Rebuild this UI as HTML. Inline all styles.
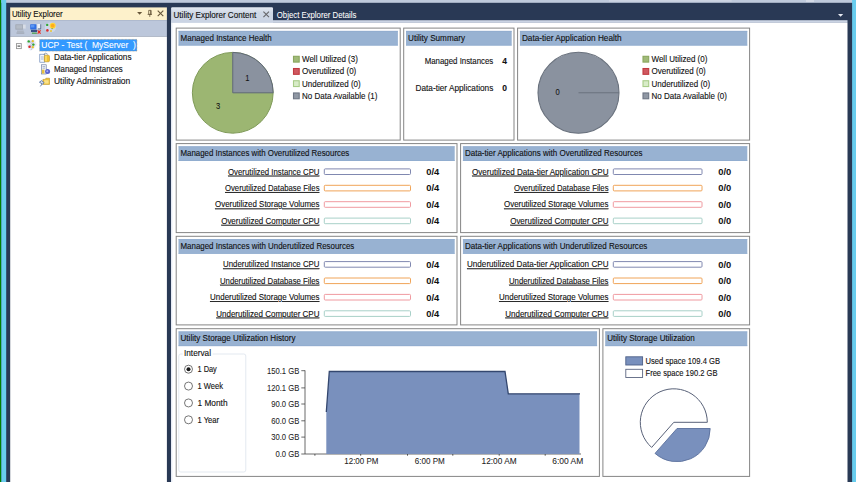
<!DOCTYPE html>
<html lang="en"><head><meta charset="utf-8"><title>Utility Explorer</title>
<style>
html,body{margin:0;padding:0;background:#293955;}
body{width:856px;height:482px;overflow:hidden;font-family:"Liberation Sans",Arial,sans-serif;}
svg{display:block;}
text{white-space:pre;}
</style></head><body>
<svg width="856" height="482" viewBox="0 0 856 482" font-family="'Liberation Sans', Arial, sans-serif" font-size="8">
<rect x="0" y="0" width="856" height="482" fill="#293955" />
<rect x="0" y="0" width="856" height="2.8" fill="#bfcadc" />
<rect x="609" y="0" width="122.6" height="1.6" fill="#ccd4e2" />
<rect x="806" y="0" width="8" height="2" fill="#d3dae6" />
<rect x="852.1" y="0" width="3.9" height="482" fill="#68cdee" />
<rect x="0" y="0" width="1.3" height="482" fill="#008000" />
<rect x="1.3" y="0" width="4.9" height="482" fill="#68cdee" />
<rect x="10.2" y="7.4" width="156.7" height="12.7" fill="#fdf1cb" />
<rect x="10.2" y="20.1" width="156.7" height="16.5" fill="#bcc7db" />
<rect x="10.2" y="36.6" width="156.7" height="445.4" fill="#ffffff" />
<text x="11.9" y="16.7" font-size="8.56" text-anchor="start" fill="#111"  textLength="50.8" lengthAdjust="spacingAndGlyphs" stroke="#111" stroke-width="0.12">Utility Explorer</text>
<path d="M137.1 12h5.1l-2.55 2.8z" fill="#66563a"/>
<path d="M148.7 10.4h2.4v4h-2.4zM150.6 10.4v4M147.6 14.4h4.4M149.8 14.6v2.3" fill="none" stroke="#66563a" stroke-width="0.8"/>
<path d="M157.7 10.7l5.6 5.4M163.3 10.7l-5.6 5.4" stroke="#66563a" stroke-width="1.1" fill="none"/>
<g><rect x="15.3" y="24.3" width="8" height="5.4" rx="0.6" fill="#a4abb6"/><rect x="16.3" y="25.2" width="6" height="3.4" fill="#b4bbc6"/><rect x="23" y="24.6" width="2.7" height="4" fill="#d8dde6"/><rect x="17" y="30.6" width="6.8" height="1.2" fill="#a9b0bc"/><rect x="16.5" y="32.4" width="7.8" height="1.3" fill="#9ea6b3"/></g>
<g><rect x="30.2" y="24.2" width="6.2" height="5.2" rx="0.5" fill="#2f6fe4"/><rect x="31" y="24.9" width="3.4" height="2.6" fill="#5a96f4"/><rect x="37.3" y="24" width="3.4" height="4.6" fill="#eef2f8"/><path d="M40.7 24.2v4.6M38 28.9h2.9" stroke="#3a4a72" stroke-width="0.7" fill="none"/><rect x="31" y="29.8" width="6" height="2.2" fill="#3a4f86"/><rect x="31.9" y="32.6" width="5" height="1.1" fill="#3c9a3c"/><path d="M37.6 30.4l3 3.3M40.6 30.4l-3 3.3" stroke="#e8281e" stroke-width="1.2"/></g>
<g><ellipse cx="50.4" cy="27.6" rx="5.6" ry="5" fill="#d4def0" opacity="0.7"/><circle cx="52.7" cy="25.7" r="3" fill="#ffd638"/><circle cx="52.7" cy="25.7" r="1.9" fill="#ffab1e"/><circle cx="47.2" cy="24.9" r="1.2" fill="#36a836"/><circle cx="47.4" cy="30.4" r="1.3" fill="#d92f2f"/><circle cx="51" cy="31.1" r="1" fill="#e8c62e"/><circle cx="52.1" cy="28.6" r="0.7" fill="#6aa83a"/></g>
<rect x="16.5" y="43.6" width="4.8" height="5" fill="#fff" stroke="#969696" stroke-width="0.9"/><path d="M17.5 46.1h2.8" stroke="#333" stroke-width="1"/>
<g><path d="M27.4 39.8L34.2 39.6L36.8 44.6L33.6 49L30.6 50.8L28.2 48.6L26.3 42.6Z" fill="#e6e9f6" opacity="0.85"/><path d="M28.7 41.4L32.8 41.2L33.4 44.6L29.5 46.8L32.8 47.2L31 50M28.7 41.4L33.4 44.6M32.8 41.2L29.5 46.8M33.4 44.6L32.8 47.2" stroke="#b5bdd8" stroke-width="0.8" fill="none"/><circle cx="28.7" cy="41.4" r="1.2" fill="#2fa62f"/><circle cx="32.8" cy="41.2" r="1.15" fill="#e6c42c"/><circle cx="33.4" cy="44.6" r="1.2" fill="#2fa62f"/><circle cx="29.5" cy="46.8" r="1.25" fill="#d92b2b"/><circle cx="32.8" cy="47.2" r="1.15" fill="#e6c42c"/></g>
<rect x="39.6" y="39.4" width="97.3" height="11.7" fill="#3399ff"/>
<rect x="39.6" y="39.4" width="97.3" height="11.7" fill="none" stroke="#b08a58" stroke-width="0.6" stroke-dasharray="0.7 0.7"/>
<text x="41.3" y="47.7" font-size="8.56" text-anchor="start" fill="#fff" xml:space="preserve" textLength="94.5" lengthAdjust="spacingAndGlyphs" stroke="#fff" stroke-width="0.08">UCP - Test (  MyServer  )</text>
<g><rect x="39.8" y="54.2" width="5" height="8" fill="#f4f7fc" stroke="#5878b0" stroke-width="0.6"/><path d="M41 57h2.5M41 59h2.5" stroke="#5878b0" stroke-width="0.5"/><rect x="44.3" y="55.2" width="5.2" height="6.6" rx="1.2" fill="#f2c230" stroke="#b08418" stroke-width="0.5"/><rect x="45.3" y="55.8" width="1.4" height="5.4" fill="#fbe27a"/><path d="M43.6 54.4q2-2.4 4.2 0" stroke="#7c8694" stroke-width="0.8" fill="none"/></g>
<g><rect x="41.5" y="64.8" width="4.7" height="9.2" fill="#f6f8fc" stroke="#5c6f98" stroke-width="0.6"/><path d="M42.5 66.6h2.7M42.5 68.2h2.7" stroke="#5c6f98" stroke-width="0.5"/><rect x="41.9" y="69.6" width="2.6" height="4" fill="#e6c040"/><circle cx="47.6" cy="71.6" r="2.5" fill="#5a62cc"/><circle cx="47.3" cy="71.3" r="1" fill="#aab0f0"/></g>
<g><path d="M42.9 79.4h2.4l0.6-1.2h3.6v6.2h-6.6z" fill="#f0c234" stroke="#b08418" stroke-width="0.5"/><rect x="44.2" y="80.2" width="4.4" height="3.4" fill="#fae28a"/><path d="M39.4 82.2l2.2-1.6 2.4 2-1.4 1.6zM42 84l-1.6 2.4" stroke="#5f78a8" stroke-width="0.9" fill="#cfd8ea"/></g>
<text x="54" y="59.8" font-size="8.56" text-anchor="start" fill="#111"  textLength="77.5" lengthAdjust="spacingAndGlyphs" stroke="#111" stroke-width="0.12">Data-tier Applications</text>
<text x="54" y="72.1" font-size="8.56" text-anchor="start" fill="#111"  textLength="68.8" lengthAdjust="spacingAndGlyphs" stroke="#111" stroke-width="0.12">Managed Instances</text>
<text x="54" y="84.3" font-size="8.56" text-anchor="start" fill="#111"  textLength="76.3" lengthAdjust="spacingAndGlyphs" stroke="#111" stroke-width="0.12">Utility Administration</text>
<defs><linearGradient id="tabg" x1="0" y1="0" x2="0" y2="1"><stop offset="0" stop-color="#e6ebf3"/><stop offset="0.35" stop-color="#cfd8e6"/><stop offset="1" stop-color="#cbd4e4"/></linearGradient></defs>
<path d="M171.1 23V8.4q0-1.2 1.2-1.2H271.8q1.2 0 1.2 1.2V23Z" fill="url(#tabg)"/>
<rect x="171.1" y="20.2" width="676.4" height="2.7" fill="#cbd4e4" />
<rect x="171.1" y="22.9" width="676.4" height="459.1" fill="#ffffff" />
<rect x="171.1" y="22.9" width="1.3" height="459.1" fill="#e6ebf4" />
<text x="173.5" y="17.5" font-size="8.56" text-anchor="start" fill="#111"  textLength="82.7" lengthAdjust="spacingAndGlyphs" stroke="#111" stroke-width="0.12">Utility Explorer Content</text>
<path d="M263.4 11.7l5.6 5.4M269 11.7l-5.6 5.4" stroke="#66666a" stroke-width="1.1" fill="none"/>
<text x="276.8" y="17.6" font-size="8.56" text-anchor="start" fill="#fff"  textLength="79.6" lengthAdjust="spacingAndGlyphs" stroke="#fff" stroke-width="0.05">Object Explorer Details</text>
<path d="M838 13.9h5.2l-2.6 2.9z" fill="#e8ecf4"/>
<rect x="176.2" y="28.1" width="224.0" height="112.0" fill="#fff" stroke="#858585" stroke-width="1"/>
<rect x="178.5" y="30.900000000000002" width="219.4" height="14.6" fill="#98b2d2" />
<rect x="178.5" y="30.900000000000002" width="219.4" height="0.7" fill="#8fabce" />
<rect x="178.5" y="44.8" width="219.4" height="0.7" fill="#8fabce" />
<text x="180.5" y="40.7" font-size="8.56" text-anchor="start" fill="#111"  textLength="91.3" lengthAdjust="spacingAndGlyphs" stroke="#111" stroke-width="0.12">Managed Instance Health</text>
<rect x="403.7" y="28.1" width="110.30000000000001" height="112.0" fill="#fff" stroke="#858585" stroke-width="1"/>
<rect x="406.0" y="30.900000000000002" width="105.70000000000002" height="14.6" fill="#98b2d2" />
<rect x="406.0" y="30.900000000000002" width="105.70000000000002" height="0.7" fill="#8fabce" />
<rect x="406.0" y="44.8" width="105.70000000000002" height="0.7" fill="#8fabce" />
<text x="408.0" y="40.7" font-size="8.56" text-anchor="start" fill="#111"  textLength="57" lengthAdjust="spacingAndGlyphs" stroke="#111" stroke-width="0.12">Utility Summary</text>
<rect x="517.6" y="28.1" width="232.0" height="112.0" fill="#fff" stroke="#858585" stroke-width="1"/>
<rect x="519.9" y="30.900000000000002" width="227.4" height="14.6" fill="#98b2d2" />
<rect x="519.9" y="30.900000000000002" width="227.4" height="0.7" fill="#8fabce" />
<rect x="519.9" y="44.8" width="227.4" height="0.7" fill="#8fabce" />
<text x="521.9" y="40.7" font-size="8.56" text-anchor="start" fill="#111"  textLength="99.8" lengthAdjust="spacingAndGlyphs" stroke="#111" stroke-width="0.12">Data-tier Application Health</text>
<circle cx="232.75" cy="92.8" r="40.4" fill="#9cb672" stroke="#7f9a58" stroke-width="1"/>
<path d="M232.75 92.8V52.4A40.4 40.4 0 0 1 273.15 92.8Z" fill="#8a929f" stroke="#606878" stroke-width="1"/>
<text x="247.3" y="80.6" font-size="8.13" text-anchor="middle" fill="#111"  textLength="4.23" lengthAdjust="spacingAndGlyphs" stroke="#111" stroke-width="0.05">1</text>
<text x="218.2" y="109" font-size="8.13" text-anchor="middle" fill="#111"  textLength="4.23" lengthAdjust="spacingAndGlyphs" stroke="#111" stroke-width="0.05">3</text>
<rect x="293.5" y="56.30" width="5.7" height="5.8" fill="#a0ba78" stroke="#8aa65e" stroke-width="1.1"/>
<text x="302" y="62.1" font-size="8.56" text-anchor="start" fill="#111"  textLength="55.88" lengthAdjust="spacingAndGlyphs" stroke="#111" stroke-width="0.12">Well Utilized (3)</text>
<rect x="293.5" y="68.52" width="5.7" height="5.8" fill="#d05860" stroke="#c03a40" stroke-width="1.1"/>
<text x="302" y="74.32" font-size="8.56" text-anchor="start" fill="#111"  textLength="54.25" lengthAdjust="spacingAndGlyphs" stroke="#111" stroke-width="0.12">Overutilized (0)</text>
<rect x="293.5" y="80.74" width="5.7" height="5.8" fill="#d8ecc8" stroke="#a8cc88" stroke-width="1.1"/>
<text x="302" y="86.54" font-size="8.56" text-anchor="start" fill="#111"  textLength="58.7" lengthAdjust="spacingAndGlyphs" stroke="#111" stroke-width="0.12">Underutilized (0)</text>
<rect x="293.5" y="92.96" width="5.7" height="5.8" fill="#9098a4" stroke="#6e7684" stroke-width="1.1"/>
<text x="302" y="98.76" font-size="8.56" text-anchor="start" fill="#111"  textLength="75.46" lengthAdjust="spacingAndGlyphs" stroke="#111" stroke-width="0.12">No Data Available (1)</text>
<text x="493.3" y="63.8" font-size="8.56" text-anchor="end" fill="#111"  textLength="68.6" lengthAdjust="spacingAndGlyphs" stroke="#111" stroke-width="0.12">Managed Instances</text>
<text x="504.7" y="63.8" font-size="9.1" text-anchor="middle" fill="#111" font-weight="bold" textLength="4.73" lengthAdjust="spacingAndGlyphs" stroke="#111" stroke-width="0.12">4</text>
<text x="493.3" y="90.8" font-size="8.56" text-anchor="end" fill="#111"  textLength="77.8" lengthAdjust="spacingAndGlyphs" stroke="#111" stroke-width="0.12">Data-tier Applications</text>
<text x="504.7" y="90.5" font-size="9.1" text-anchor="middle" fill="#111" font-weight="bold" textLength="4.73" lengthAdjust="spacingAndGlyphs" stroke="#111" stroke-width="0.12">0</text>
<circle cx="578.5" cy="92.8" r="40.5" fill="#8a929f" stroke="#69717d" stroke-width="1.1"/>
<path d="M578.5 92.8H619.0" stroke="#6a727e" stroke-width="1.1"/>
<text x="557.6" y="95.2" font-size="8.13" text-anchor="middle" fill="#111"  textLength="4.23" lengthAdjust="spacingAndGlyphs" stroke="#111" stroke-width="0.05">0</text>
<rect x="643" y="56.30" width="5.7" height="5.8" fill="#a0ba78" stroke="#8aa65e" stroke-width="1.1"/>
<text x="651.5" y="62.1" font-size="8.56" text-anchor="start" fill="#111"  textLength="55.88" lengthAdjust="spacingAndGlyphs" stroke="#111" stroke-width="0.12">Well Utilized (0)</text>
<rect x="643" y="68.52" width="5.7" height="5.8" fill="#d05860" stroke="#c03a40" stroke-width="1.1"/>
<text x="651.5" y="74.32" font-size="8.56" text-anchor="start" fill="#111"  textLength="54.25" lengthAdjust="spacingAndGlyphs" stroke="#111" stroke-width="0.12">Overutilized (0)</text>
<rect x="643" y="80.74" width="5.7" height="5.8" fill="#d8ecc8" stroke="#a8cc88" stroke-width="1.1"/>
<text x="651.5" y="86.54" font-size="8.56" text-anchor="start" fill="#111"  textLength="58.7" lengthAdjust="spacingAndGlyphs" stroke="#111" stroke-width="0.12">Underutilized (0)</text>
<rect x="643" y="92.96" width="5.7" height="5.8" fill="#9098a4" stroke="#6e7684" stroke-width="1.1"/>
<text x="651.5" y="98.76" font-size="8.56" text-anchor="start" fill="#111"  textLength="75.46" lengthAdjust="spacingAndGlyphs" stroke="#111" stroke-width="0.12">No Data Available (0)</text>
<rect x="176.2" y="143.6" width="280.8" height="89.0" fill="#fff" stroke="#858585" stroke-width="1"/>
<rect x="178.5" y="146.4" width="276.2" height="14.6" fill="#98b2d2" />
<rect x="178.5" y="146.4" width="276.2" height="0.7" fill="#8fabce" />
<rect x="178.5" y="160.29999999999998" width="276.2" height="0.7" fill="#8fabce" />
<text x="180.5" y="156.2" font-size="8.56" text-anchor="start" fill="#111"  textLength="168.8" lengthAdjust="spacingAndGlyphs" stroke="#111" stroke-width="0.12">Managed Instances with Overutilized Resources</text>
<text x="319.5" y="174.6" font-size="8.56" text-anchor="end" fill="#111" text-decoration="underline" textLength="91.5" lengthAdjust="spacingAndGlyphs" stroke="#111" stroke-width="0.12">Overutilized Instance CPU</text>
<rect x="324.3" y="168.90" width="86.20" height="5.6" rx="0.9" fill="#fff" stroke="#8088b0" stroke-width="1"/>
<text x="432.8" y="174.99999999999997" font-size="9.63" text-anchor="middle" fill="#111" font-weight="bold" textLength="13" lengthAdjust="spacingAndGlyphs">0/4</text>
<text x="319.5" y="191.0" font-size="8.56" text-anchor="end" fill="#111" text-decoration="underline" textLength="94.5" lengthAdjust="spacingAndGlyphs" stroke="#111" stroke-width="0.12">Overutilized Database Files</text>
<rect x="324.3" y="185.30" width="86.20" height="5.6" rx="0.9" fill="#fff" stroke="#f0a458" stroke-width="1"/>
<text x="432.8" y="191.39999999999998" font-size="9.63" text-anchor="middle" fill="#111" font-weight="bold" textLength="13" lengthAdjust="spacingAndGlyphs">0/4</text>
<text x="319.5" y="207.39999999999998" font-size="8.56" text-anchor="end" fill="#111" text-decoration="underline" textLength="104.5" lengthAdjust="spacingAndGlyphs" stroke="#111" stroke-width="0.12">Overutilized Storage Volumes</text>
<rect x="324.3" y="201.70" width="86.20" height="5.6" rx="0.9" fill="#fff" stroke="#f09aa0" stroke-width="1"/>
<text x="432.8" y="207.79999999999995" font-size="9.63" text-anchor="middle" fill="#111" font-weight="bold" textLength="13" lengthAdjust="spacingAndGlyphs">0/4</text>
<text x="319.5" y="223.79999999999998" font-size="8.56" text-anchor="end" fill="#111" text-decoration="underline" textLength="98.3" lengthAdjust="spacingAndGlyphs" stroke="#111" stroke-width="0.12">Overutilized Computer CPU</text>
<rect x="324.3" y="218.10" width="86.20" height="5.6" rx="0.9" fill="#fff" stroke="#a8d0c8" stroke-width="1"/>
<text x="432.8" y="224.19999999999996" font-size="9.63" text-anchor="middle" fill="#111" font-weight="bold" textLength="13" lengthAdjust="spacingAndGlyphs">0/4</text>
<rect x="460.6" y="143.6" width="289.0" height="89.0" fill="#fff" stroke="#858585" stroke-width="1"/>
<rect x="462.90000000000003" y="146.4" width="284.4" height="14.6" fill="#98b2d2" />
<rect x="462.90000000000003" y="146.4" width="284.4" height="0.7" fill="#8fabce" />
<rect x="462.90000000000003" y="160.29999999999998" width="284.4" height="0.7" fill="#8fabce" />
<text x="464.90000000000003" y="156.2" font-size="8.56" text-anchor="start" fill="#111"  textLength="177.5" lengthAdjust="spacingAndGlyphs" stroke="#111" stroke-width="0.12">Data-tier Applications with Overutilized Resources</text>
<text x="608.5" y="174.6" font-size="8.56" text-anchor="end" fill="#111" text-decoration="underline" textLength="136.5" lengthAdjust="spacingAndGlyphs" stroke="#111" stroke-width="0.12">Overutilized Data-tier Application CPU</text>
<rect x="613.3" y="168.90" width="88.70" height="5.6" rx="0.9" fill="#fff" stroke="#8088b0" stroke-width="1"/>
<text x="724.8" y="174.99999999999997" font-size="9.63" text-anchor="middle" fill="#111" font-weight="bold" textLength="13" lengthAdjust="spacingAndGlyphs">0/0</text>
<text x="608.5" y="191.0" font-size="8.56" text-anchor="end" fill="#111" text-decoration="underline" textLength="94.5" lengthAdjust="spacingAndGlyphs" stroke="#111" stroke-width="0.12">Overutilized Database Files</text>
<rect x="613.3" y="185.30" width="88.70" height="5.6" rx="0.9" fill="#fff" stroke="#f0a458" stroke-width="1"/>
<text x="724.8" y="191.39999999999998" font-size="9.63" text-anchor="middle" fill="#111" font-weight="bold" textLength="13" lengthAdjust="spacingAndGlyphs">0/0</text>
<text x="608.5" y="207.39999999999998" font-size="8.56" text-anchor="end" fill="#111" text-decoration="underline" textLength="104.5" lengthAdjust="spacingAndGlyphs" stroke="#111" stroke-width="0.12">Overutilized Storage Volumes</text>
<rect x="613.3" y="201.70" width="88.70" height="5.6" rx="0.9" fill="#fff" stroke="#f09aa0" stroke-width="1"/>
<text x="724.8" y="207.79999999999995" font-size="9.63" text-anchor="middle" fill="#111" font-weight="bold" textLength="13" lengthAdjust="spacingAndGlyphs">0/0</text>
<text x="608.5" y="223.79999999999998" font-size="8.56" text-anchor="end" fill="#111" text-decoration="underline" textLength="98.3" lengthAdjust="spacingAndGlyphs" stroke="#111" stroke-width="0.12">Overutilized Computer CPU</text>
<rect x="613.3" y="218.10" width="88.70" height="5.6" rx="0.9" fill="#fff" stroke="#a8d0c8" stroke-width="1"/>
<text x="724.8" y="224.19999999999996" font-size="9.63" text-anchor="middle" fill="#111" font-weight="bold" textLength="13" lengthAdjust="spacingAndGlyphs">0/0</text>
<rect x="176.2" y="236.3" width="280.8" height="88.59999999999997" fill="#fff" stroke="#858585" stroke-width="1"/>
<rect x="178.5" y="239.10000000000002" width="276.2" height="14.6" fill="#98b2d2" />
<rect x="178.5" y="239.10000000000002" width="276.2" height="0.7" fill="#8fabce" />
<rect x="178.5" y="253.0" width="276.2" height="0.7" fill="#8fabce" />
<text x="180.5" y="248.9" font-size="8.56" text-anchor="start" fill="#111"  textLength="173.8" lengthAdjust="spacingAndGlyphs" stroke="#111" stroke-width="0.12">Managed Instances with Underutilized Resources</text>
<text x="319.5" y="267.3" font-size="8.56" text-anchor="end" fill="#111" text-decoration="underline" textLength="96.5" lengthAdjust="spacingAndGlyphs" stroke="#111" stroke-width="0.12">Underutilized Instance CPU</text>
<rect x="324.3" y="261.60" width="86.20" height="5.6" rx="0.9" fill="#fff" stroke="#8088b0" stroke-width="1"/>
<text x="432.8" y="267.7" font-size="9.63" text-anchor="middle" fill="#111" font-weight="bold" textLength="13" lengthAdjust="spacingAndGlyphs">0/4</text>
<text x="319.5" y="283.7" font-size="8.56" text-anchor="end" fill="#111" text-decoration="underline" textLength="99.5" lengthAdjust="spacingAndGlyphs" stroke="#111" stroke-width="0.12">Underutilized Database Files</text>
<rect x="324.3" y="278.00" width="86.20" height="5.6" rx="0.9" fill="#fff" stroke="#f0a458" stroke-width="1"/>
<text x="432.8" y="284.09999999999997" font-size="9.63" text-anchor="middle" fill="#111" font-weight="bold" textLength="13" lengthAdjust="spacingAndGlyphs">0/4</text>
<text x="319.5" y="300.1" font-size="8.56" text-anchor="end" fill="#111" text-decoration="underline" textLength="109.5" lengthAdjust="spacingAndGlyphs" stroke="#111" stroke-width="0.12">Underutilized Storage Volumes</text>
<rect x="324.3" y="294.40" width="86.20" height="5.6" rx="0.9" fill="#fff" stroke="#f09aa0" stroke-width="1"/>
<text x="432.8" y="300.5" font-size="9.63" text-anchor="middle" fill="#111" font-weight="bold" textLength="13" lengthAdjust="spacingAndGlyphs">0/4</text>
<text x="319.5" y="316.5" font-size="8.56" text-anchor="end" fill="#111" text-decoration="underline" textLength="103.3" lengthAdjust="spacingAndGlyphs" stroke="#111" stroke-width="0.12">Underutilized Computer CPU</text>
<rect x="324.3" y="310.80" width="86.20" height="5.6" rx="0.9" fill="#fff" stroke="#a8d0c8" stroke-width="1"/>
<text x="432.8" y="316.9" font-size="9.63" text-anchor="middle" fill="#111" font-weight="bold" textLength="13" lengthAdjust="spacingAndGlyphs">0/4</text>
<rect x="460.6" y="236.3" width="289.0" height="88.59999999999997" fill="#fff" stroke="#858585" stroke-width="1"/>
<rect x="462.90000000000003" y="239.10000000000002" width="284.4" height="14.6" fill="#98b2d2" />
<rect x="462.90000000000003" y="239.10000000000002" width="284.4" height="0.7" fill="#8fabce" />
<rect x="462.90000000000003" y="253.0" width="284.4" height="0.7" fill="#8fabce" />
<text x="464.90000000000003" y="248.9" font-size="8.56" text-anchor="start" fill="#111"  textLength="182.5" lengthAdjust="spacingAndGlyphs" stroke="#111" stroke-width="0.12">Data-tier Applications with Underutilized Resources</text>
<text x="608.5" y="267.3" font-size="8.56" text-anchor="end" fill="#111" text-decoration="underline" textLength="141.5" lengthAdjust="spacingAndGlyphs" stroke="#111" stroke-width="0.12">Underutilized Data-tier Application CPU</text>
<rect x="613.3" y="261.60" width="88.70" height="5.6" rx="0.9" fill="#fff" stroke="#8088b0" stroke-width="1"/>
<text x="724.8" y="267.7" font-size="9.63" text-anchor="middle" fill="#111" font-weight="bold" textLength="13" lengthAdjust="spacingAndGlyphs">0/0</text>
<text x="608.5" y="283.7" font-size="8.56" text-anchor="end" fill="#111" text-decoration="underline" textLength="99.5" lengthAdjust="spacingAndGlyphs" stroke="#111" stroke-width="0.12">Underutilized Database Files</text>
<rect x="613.3" y="278.00" width="88.70" height="5.6" rx="0.9" fill="#fff" stroke="#f0a458" stroke-width="1"/>
<text x="724.8" y="284.09999999999997" font-size="9.63" text-anchor="middle" fill="#111" font-weight="bold" textLength="13" lengthAdjust="spacingAndGlyphs">0/0</text>
<text x="608.5" y="300.1" font-size="8.56" text-anchor="end" fill="#111" text-decoration="underline" textLength="109.5" lengthAdjust="spacingAndGlyphs" stroke="#111" stroke-width="0.12">Underutilized Storage Volumes</text>
<rect x="613.3" y="294.40" width="88.70" height="5.6" rx="0.9" fill="#fff" stroke="#f09aa0" stroke-width="1"/>
<text x="724.8" y="300.5" font-size="9.63" text-anchor="middle" fill="#111" font-weight="bold" textLength="13" lengthAdjust="spacingAndGlyphs">0/0</text>
<text x="608.5" y="316.5" font-size="8.56" text-anchor="end" fill="#111" text-decoration="underline" textLength="103.3" lengthAdjust="spacingAndGlyphs" stroke="#111" stroke-width="0.12">Underutilized Computer CPU</text>
<rect x="613.3" y="310.80" width="88.70" height="5.6" rx="0.9" fill="#fff" stroke="#a8d0c8" stroke-width="1"/>
<text x="724.8" y="316.9" font-size="9.63" text-anchor="middle" fill="#111" font-weight="bold" textLength="13" lengthAdjust="spacingAndGlyphs">0/0</text>
<rect x="176.2" y="328.7" width="423.2" height="147.7" fill="#fff" stroke="#858585" stroke-width="1"/>
<rect x="178.5" y="331.5" width="418.59999999999997" height="14.6" fill="#98b2d2" />
<rect x="178.5" y="331.5" width="418.59999999999997" height="0.7" fill="#8fabce" />
<rect x="178.5" y="345.4" width="418.59999999999997" height="0.7" fill="#8fabce" />
<text x="180.5" y="341.3" font-size="8.56" text-anchor="start" fill="#111"  textLength="115" lengthAdjust="spacingAndGlyphs" stroke="#111" stroke-width="0.12">Utility Storage Utilization History</text>
<rect x="602.9" y="328.7" width="146.70000000000005" height="147.7" fill="#fff" stroke="#858585" stroke-width="1"/>
<rect x="605.1999999999999" y="331.5" width="142.10000000000005" height="14.6" fill="#98b2d2" />
<rect x="605.1999999999999" y="331.5" width="142.10000000000005" height="0.7" fill="#8fabce" />
<rect x="605.1999999999999" y="345.4" width="142.10000000000005" height="0.7" fill="#8fabce" />
<text x="607.1999999999999" y="341.3" font-size="8.56" text-anchor="start" fill="#111"  textLength="87.5" lengthAdjust="spacingAndGlyphs" stroke="#111" stroke-width="0.12">Utility Storage Utilization</text>
<rect x="178.8" y="354" width="67" height="118" rx="2" fill="none" stroke="#e0e7ee" stroke-width="0.9"/>
<rect x="182.6" y="350" width="30" height="8" fill="#fff" />
<text x="184" y="355.8" font-size="8.56" text-anchor="start" fill="#111"  textLength="27" lengthAdjust="spacingAndGlyphs" stroke="#111" stroke-width="0.12">Interval</text>
<circle cx="188.5" cy="369.20" r="4" fill="#fff" stroke="#4a4a4a" stroke-width="0.75"/>
<circle cx="188.5" cy="369.20" r="2" fill="#1a1a1a"/>
<text x="197.5" y="372.2" font-size="8.56" text-anchor="start" fill="#111"  textLength="19.3" lengthAdjust="spacingAndGlyphs" stroke="#111" stroke-width="0.12">1 Day</text>
<circle cx="188.5" cy="386.07" r="4" fill="#fff" stroke="#4a4a4a" stroke-width="0.75"/>
<text x="197.5" y="389.07" font-size="8.56" text-anchor="start" fill="#111"  textLength="25.5" lengthAdjust="spacingAndGlyphs" stroke="#111" stroke-width="0.12">1 Week</text>
<circle cx="188.5" cy="402.94" r="4" fill="#fff" stroke="#4a4a4a" stroke-width="0.75"/>
<text x="197.5" y="405.94" font-size="8.56" text-anchor="start" fill="#111"  textLength="30" lengthAdjust="spacingAndGlyphs" stroke="#111" stroke-width="0.12">1 Month</text>
<circle cx="188.5" cy="419.81" r="4" fill="#fff" stroke="#4a4a4a" stroke-width="0.75"/>
<text x="197.5" y="422.81" font-size="8.56" text-anchor="start" fill="#111"  textLength="21.5" lengthAdjust="spacingAndGlyphs" stroke="#111" stroke-width="0.12">1 Year</text>
<text x="299.3" y="373.5" font-size="8.56" text-anchor="end" fill="#222"  textLength="32.3272265625" lengthAdjust="spacingAndGlyphs" stroke="#222" stroke-width="0.06">150.1 GB</text>
<path d="M301.3 370.7H305" stroke="#444" stroke-width="0.8"/>
<text x="299.3" y="390.7" font-size="8.56" text-anchor="end" fill="#222"  textLength="32.3272265625" lengthAdjust="spacingAndGlyphs" stroke="#222" stroke-width="0.06">120.1 GB</text>
<path d="M301.3 387.9H305" stroke="#444" stroke-width="0.8"/>
<text x="299.3" y="406.8" font-size="8.56" text-anchor="end" fill="#222"  textLength="28.0719140625" lengthAdjust="spacingAndGlyphs" stroke="#222" stroke-width="0.06">90.0 GB</text>
<path d="M301.3 404H305" stroke="#444" stroke-width="0.8"/>
<text x="299.3" y="423.6" font-size="8.56" text-anchor="end" fill="#222"  textLength="28.0719140625" lengthAdjust="spacingAndGlyphs" stroke="#222" stroke-width="0.06">60.0 GB</text>
<path d="M301.3 420.8H305" stroke="#444" stroke-width="0.8"/>
<text x="299.3" y="439.90000000000003" font-size="8.56" text-anchor="end" fill="#222"  textLength="28.0719140625" lengthAdjust="spacingAndGlyphs" stroke="#222" stroke-width="0.06">30.0 GB</text>
<path d="M301.3 437.1H305" stroke="#444" stroke-width="0.8"/>
<text x="299.3" y="456.8" font-size="8.56" text-anchor="end" fill="#222"  textLength="23.8166015625" lengthAdjust="spacingAndGlyphs" stroke="#222" stroke-width="0.06">0.0 GB</text>
<path d="M301.3 454H305" stroke="#444" stroke-width="0.8"/>
<path d="M305 370.40000000000003V454H581" stroke="#444" stroke-width="0.8" fill="none"/>
<path d="M314.9 454v1.7" stroke="#444" stroke-width="0.9"/>
<path d="M360.7 454v1.7" stroke="#444" stroke-width="0.9"/>
<path d="M407.5 454v1.7" stroke="#444" stroke-width="0.9"/>
<path d="M452.8 454v1.7" stroke="#444" stroke-width="0.9"/>
<path d="M499.2 454v1.7" stroke="#444" stroke-width="0.9"/>
<path d="M545.2 454v1.7" stroke="#444" stroke-width="0.9"/>
<path d="M326.3 454V412L329.3 371.5H505L508.3 393.8H579.5V454Z" fill="#7990bd"/>
<path d="M326.3 412L329.3 371.5H505L508.3 393.8H580" fill="none" stroke="#34476f" stroke-width="1.3" stroke-linejoin="miter"/>
<text x="361.3" y="464" font-size="8.56" text-anchor="middle" fill="#222"  textLength="34" lengthAdjust="spacingAndGlyphs" stroke="#222" stroke-width="0.06">12:00 PM</text>
<text x="429.8" y="464" font-size="8.56" text-anchor="middle" fill="#222"  textLength="30" lengthAdjust="spacingAndGlyphs" stroke="#222" stroke-width="0.06">6:00 PM</text>
<text x="499.1" y="464" font-size="8.56" text-anchor="middle" fill="#222"  textLength="35" lengthAdjust="spacingAndGlyphs" stroke="#222" stroke-width="0.06">12:00 AM</text>
<text x="567.8" y="464" font-size="8.56" text-anchor="middle" fill="#222"  textLength="31" lengthAdjust="spacingAndGlyphs" stroke="#222" stroke-width="0.06">6:00 AM</text>
<rect x="625.8" y="356.8" width="16.8" height="8.2" fill="#7990bd" stroke="#4f6088" stroke-width="0.9"/>
<rect x="625.8" y="369.3" width="16.8" height="8.2" fill="#fff" stroke="#5c6680" stroke-width="0.9"/>
<text x="645.5" y="363.8" font-size="8.56" text-anchor="start" fill="#111"  textLength="74.5" lengthAdjust="spacingAndGlyphs" stroke="#111" stroke-width="0.12">Used space 109.4 GB</text>
<text x="645.5" y="375.8" font-size="8.56" text-anchor="start" fill="#111"  textLength="72" lengthAdjust="spacingAndGlyphs" stroke="#111" stroke-width="0.12">Free space 190.2 GB</text>
<path d="M673.8 422.3L651.65 447.43A33.5 33.5 0 1 1 707.3 422.3Z" fill="#fff" stroke="#586178" stroke-width="1"/>
<path d="M677 428.5H710.2A33.2 33.2 0 0 1 655.04 453.40Z" fill="#7990bd" stroke="#5a6f9c" stroke-width="0.9"/>
</svg>
</body></html>
